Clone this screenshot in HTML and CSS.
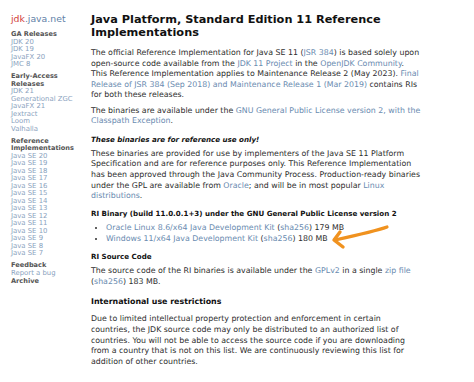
FILE: index.html
```html
<!DOCTYPE html>
<html lang="en">
<head>
  <meta charset="UTF-8" />
  <title>Java Platform, Standard Edition 11 Reference Implementations</title>
  <link rel="stylesheet" href="styles.css">
</head>
<body>
  <div class="page">
    <!-- Sidebar navigation -->
    <div class="sidebar">
      <div class="logo"><span class="logo-jdk">jdk</span>.java.net</div>
      <div class="nav-group">
        <div class="nav-title">GA Releases</div>
        <a href="#">JDK 20</a>
        <a href="#">JDK 19</a>
        <a href="#">JavaFX 20</a>
        <a href="#">JMC 8</a>
      </div>
      <div class="nav-group">
        <div class="nav-title">Early-Access Releases</div>
        <a href="#">JDK 21</a>
        <a href="#">Generational ZGC</a>
        <a href="#">JavaFX 21</a>
        <a href="#">Jextract</a>
        <a href="#">Loom</a>
        <a href="#">Valhalla</a>
      </div>
      <div class="nav-group">
        <div class="nav-title">Reference Implementations</div>
        <a href="#">Java SE 20</a>
        <a href="#">Java SE 19</a>
        <a href="#">Java SE 18</a>
        <a href="#">Java SE 17</a>
        <a href="#">Java SE 16</a>
        <a href="#">Java SE 15</a>
        <a href="#">Java SE 14</a>
        <a href="#">Java SE 13</a>
        <a href="#">Java SE 12</a>
        <a href="#">Java SE 11</a>
        <a href="#">Java SE 10</a>
        <a href="#">Java SE 9</a>
        <a href="#">Java SE 8</a>
        <a href="#">Java SE 7</a>
      </div>
      <div class="nav-group nav-group-tight">
        <div class="nav-title">Feedback</div>
        <a href="#">Report a bug</a>
      </div>
      <div class="nav-group">
        <div class="nav-title">Archive</div>
      </div>
    </div>

    <!-- Main content -->
    <div class="content">
      <h1>Java Platform, Standard Edition 11 Reference Implementations</h1>
      <p>The official Reference Implementation for Java SE 11 (<a href="#">JSR 384</a>) is based solely upon open-source code available from the <a href="#">JDK 11 Project</a> in the <a href="#">OpenJDK Community</a>. This Reference Implementation applies to Maintenance Release 2 (May 2023). <a href="#">Final Release of JSR 384 (Sep 2018) and Maintenance Release 1 (Mar 2019)</a> contains RIs for both these releases.</p>
      <p>The binaries are available under the <a href="#">GNU General Public License version 2, with the Classpath Exception</a>.</p>
      <p class="warning">These binaries are for reference use only!</p>
      <p>These binaries are provided for use by implementers of the Java SE 11 Platform Specification and are for reference purposes only. This Reference Implementation has been approved through the Java Community Process. Production-ready binaries under the GPL are available from <a href="#">Oracle</a>; and will be in most popular <a href="#">Linux distributions</a>.</p>
      <h3>RI Binary (build 11.0.0.1+3) under the GNU General Public License version 2</h3>
      <ul>
        <li><a href="#">Oracle Linux 8.6/x64 Java Development Kit</a> (<a href="#">sha256</a>) 179 MB</li>
        <li><a href="#">Windows 11/x64 Java Development Kit</a> (<a href="#">sha256</a>) 180 MB</li>
      </ul>
      <h3>RI Source Code</h3>
      <p>The source code of the RI binaries is available under the <a href="#">GPLv2</a> in a single <a href="#">zip file</a> (<a href="#">sha256</a>) 183 MB.</p>
      <h2>International use restrictions</h2>
      <p>Due to limited intellectual property protection and enforcement in certain countries, the JDK source code may only be distributed to an authorized list of countries. You will not be able to access the source code if you are downloading from a country that is not on this list. We are continuously reviewing this list for addition of other countries.</p>
    </div>
  </div>

  <!-- Hand-drawn annotation arrow -->
  <svg class="arrow" width="70" height="40" viewBox="0 0 70 40">
    <path d="M59 8 C48 12, 30 16, 7 21" fill="none" stroke="#f0921f" stroke-width="3.2" stroke-linecap="round"/>
    <path d="M12 13 L6 21 L15 28" fill="none" stroke="#f0921f" stroke-width="3.4" stroke-linecap="round" stroke-linejoin="round"/>
  </svg>
</body>
</html>
```

FILE: styles.css
```css
* {
  box-sizing: border-box;
}
body {
  margin: 0;
  background: #fff;
  font-family: "DejaVu Sans", sans-serif;
  color: #2e2e2e;
}
a {
  color: #6a8bb0;
  text-decoration: none;
}
.page {
  display: flex;
  width: 474px;
  height: 382px;
  overflow: hidden;
}
/* Sidebar */
.sidebar {
  width: 91px;
  flex-shrink: 0;
  padding: 13px 0 0 11px;
  font-size: 6.9px;
  line-height: 7.5px;
}
.logo {
  font-size: 9.3px;
  line-height: 12px;
  color: #5f82a8;
  margin-bottom: 6px;
}
.logo-jdk {
  color: #d2413a;
}
.nav-group {
  display: flex;
  flex-direction: column;
  margin-bottom: 4.5px;
}
.nav-group-tight {
  margin-bottom: 1px;
}
.nav-title {
  font-weight: bold;
  font-size: 6.6px;
  color: #555;
  width: 62px;
}
.nav-group a {
  color: #8aa2be;
}
/* Main column */
.content {
  width: 330px;
  padding-top: 13px;
  font-size: 7.85px;
  line-height: 10.6px;
}
h1 {
  margin: 0 0 9px;
  font-size: 11.3px;
  line-height: 13px;
  color: #111;
}
p {
  margin: 0 0 4.6px;
}
.warning {
  font-weight: bold;
  font-style: italic;
  font-size: 7.1px;
  color: #111;
  margin-top: 8px;
  margin-bottom: 3.5px;
}
h3 {
  font-size: 7.1px;
  line-height: 10.6px;
  margin: 7px 0 4px;
  color: #111;
}
ul {
  margin: 0 0 6px;
  padding-left: 15px;
}
h2 {
  font-size: 7.9px;
  line-height: 11px;
  margin: 9px 0 7px;
  color: #111;
}
.arrow {
  position: absolute;
  left: 328px;
  top: 219px;
}
```
